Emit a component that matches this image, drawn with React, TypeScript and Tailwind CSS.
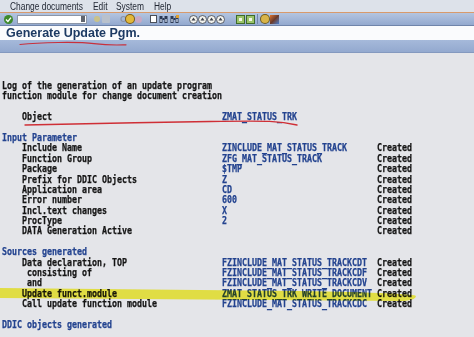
import React from "react"

// ── Log rows ───────────────────────────────────────────────

type Row =
  | { kind: "blank" }
  | { kind: "text"; text: string; color: string }
  | { kind: "item"; label: string; indent: number; value?: string; status?: string }

const BLUE = "text-[#23438f]"
const BLACK = "text-[#141414]"

const rows: Row[] = [
  { kind: "text", text: "Log of the generation of an update program", color: BLACK },
  { kind: "text", text: "function module for change document creation", color: BLACK },
  { kind: "blank" },
  { kind: "item", label: "Object", indent: 4, value: "ZMAT_STATUS_TRK" },
  { kind: "blank" },
  { kind: "text", text: "Input Parameter", color: BLUE },
  { kind: "item", label: "Include Name", indent: 4, value: "ZINCLUDE_MAT_STATUS_TRACK", status: "Created" },
  { kind: "item", label: "Function Group", indent: 4, value: "ZFG_MAT_STATUS_TRACK", status: "Created" },
  { kind: "item", label: "Package", indent: 4, value: "$TMP", status: "Created" },
  { kind: "item", label: "Prefix for DDIC Objects", indent: 4, value: "Z", status: "Created" },
  { kind: "item", label: "Application area", indent: 4, value: "CD", status: "Created" },
  { kind: "item", label: "Error number", indent: 4, value: "600", status: "Created" },
  { kind: "item", label: "Incl.text changes", indent: 4, value: "X", status: "Created" },
  { kind: "item", label: "ProcType", indent: 4, value: "2", status: "Created" },
  { kind: "item", label: "DATA Generation Active", indent: 4, value: "", status: "Created" },
  { kind: "blank" },
  { kind: "text", text: "Sources generated", color: BLUE },
  { kind: "item", label: "Data declaration, TOP", indent: 4, value: "FZINCLUDE_MAT_STATUS_TRACKCDT", status: "Created" },
  { kind: "item", label: "consisting of", indent: 5, value: "FZINCLUDE_MAT_STATUS_TRACKCDF", status: "Created" },
  { kind: "item", label: "and", indent: 5, value: "FZINCLUDE_MAT_STATUS_TRACKCDV", status: "Created" },
  { kind: "item", label: "Update funct.module", indent: 4, value: "ZMAT_STATUS_TRK_WRITE_DOCUMENT", status: "Created" },
  { kind: "item", label: "Call update function module", indent: 4, value: "FZINCLUDE_MAT_STATUS_TRACKCDC", status: "Created" },
  { kind: "blank" },
  { kind: "text", text: "DDIC objects generated", color: BLUE },
]

function LogLine({ row }: { row: Row }) {
  if (row.kind === "blank") return <div className="h-[10.4px]" />
  if (row.kind === "text")
    return <div className={`h-[10.4px] ${row.color}`}>{row.text}</div>
  const label = (" ".repeat(row.indent) + row.label).padEnd(44)
  const value = (row.value ?? "").padEnd(31)
  return (
    <div className="h-[10.4px]">
      <span className={BLACK}>{label}</span>
      <span className={BLUE}>{value}</span>
      {row.status && <span className={BLACK}>{row.status}</span>}
    </div>
  )
}

// ── Toolbar icons ──────────────────────────────────────────

function Page() {
  return <span className="ml-[8px] h-[8px] w-[7px] shrink-0 border border-[#4a4f5a] bg-white" />
}

function Binoculars({ plus, className }: { plus?: boolean; className: string }) {
  return (
    <svg width="9" height="9" viewBox="0 0 9 9" className={`shrink-0 ${className}`}>
      <rect x="0.5" y="1" width="3" height="7" fill="#2c3a55" />
      <rect x="5.5" y="1" width="3" height="7" fill="#2c3a55" />
      <rect x="3.5" y="3" width="2" height="2" fill="#2c3a55" />
      <rect x="1.3" y="4" width="1.4" height="3" fill="#c8d3e6" />
      <rect x="6.3" y="4" width="1.4" height="3" fill="#c8d3e6" />
      {plus && <rect x="6" y="0" width="3" height="3" fill="#e0a030" />}
    </svg>
  )
}

function PageArrow({ className }: { className: string }) {
  return (
    <svg width="9" height="9" viewBox="0 0 9 9" className={`shrink-0 ${className}`}>
      <circle cx="4.5" cy="4.5" r="4" fill="#f3f3ee" stroke="#3a3f4a" strokeWidth="0.8" />
      <path d="M2.5 5.5 L4.5 2.5 L6.5 5.5 Z" fill="#3a3f4a" />
    </svg>
  )
}

function GreenBox({ className }: { className: string }) {
  return (
    <span className={`flex h-[9px] w-[9px] shrink-0 items-center justify-center border border-[#3f6b2a] bg-[#9bc46a] ${className}`}>
      <span className="h-[3px] w-[3px] bg-[#f2f6e8]" />
    </span>
  )
}

// ── App ────────────────────────────────────────────────────

export default function App() {
  return (
    <div className="relative h-[337px] w-[474px] overflow-hidden bg-[#e4e5e9] font-['Liberation_Sans',Arial,sans-serif]">
      {/* menu bar */}
      <div className="flex h-[12px] items-end gap-[8px] bg-[#dde2ea] pl-[10px] text-[10px] leading-[10px] text-[#1e2430]">
        <span className="origin-bottom-left scale-x-[0.84]">Change documents</span>
        <span className="-ml-[12px] origin-bottom-left scale-x-[0.84]">Edit</span>
        <span className="-ml-[2px] origin-bottom-left scale-x-[0.84]">System</span>
        <span className="-ml-[3px] origin-bottom-left scale-x-[0.84]">Help</span>
      </div>
      <div className="h-[1px] bg-[#d89a6c]" />

      {/* system toolbar */}
      <div className="flex h-[13px] items-center border-b border-[#6f84aa] bg-gradient-to-b from-[#b4c5e0] to-[#93a9cf] pl-[4px]">
        <span className="flex h-[9px] w-[9px] shrink-0 items-center justify-center rounded-full bg-[#3d8a2c]">
          <svg width="7" height="7" viewBox="0 0 7 7">
            <path d="M1 3.6 L2.9 5.4 L6 1.6" fill="none" stroke="#fff" strokeWidth="1.4" />
          </svg>
        </span>
        <span className="ml-[4px] flex h-[9px] w-[70px] shrink-0 items-center justify-end border border-[#8c96a8] bg-white pr-[1px]">
          <span className="h-[6px] w-[4px] bg-[#60656f]" />
        </span>
        <span className="ml-[7px] h-[6px] w-[6px] shrink-0 rounded-full bg-[#c9c28a]" />
        <span className="ml-[2px] h-[8px] w-[8px] shrink-0 rounded-[1px] bg-[#b9c1cc]" />
        <span className="ml-[10px] w-[6px] shrink-0 text-[9px] font-bold leading-none text-[#8a94a6]">C</span>
        <span className="h-[8px] w-[8px] shrink-0 rounded-full bg-[#e2b83a] ring-1 ring-[#7b5a18]" />
        <span className="ml-[1px] h-[7px] w-[7px] shrink-0 rounded-full bg-[#c9a8c4]" />
        <Page />
        <Binoculars className="ml-[2px]" />
        <Binoculars plus className="ml-[2px]" />
        <PageArrow className="ml-[10px]" />
        <PageArrow className="" />
        <PageArrow className="" />
        <PageArrow className="" />
        <GreenBox className="ml-[11px]" />
        <GreenBox className="ml-[1px]" />
        <span className="ml-[2px] h-[10px] w-px shrink-0 bg-[#7186ab]" />
        <span className="ml-[3px] h-[8px] w-[8px] shrink-0 rounded-full bg-[#d8b448] ring-1 ring-[#6d5a20]" />
        <span className="ml-[1px] h-[9px] w-[9px] shrink-0 bg-gradient-to-br from-[#e0742a] via-[#6a3a2a] to-[#3a7ad0]" />
      </div>

      {/* title bar */}
      <div className="flex h-[14px] items-center bg-[#fafbfd] pl-[6px] text-[12.5px] font-bold leading-none text-[#1d3a63]">
        Generate Update Pgm.
      </div>

      {/* application toolbar */}
      <div className="h-[13px] border-b border-[#8499bf] bg-gradient-to-b from-[#a5b9da] to-[#93a9cf]" />

      {/* log list */}
      <div className="pl-[2px] pt-[28px]">
        <div className="origin-top-left scale-x-[0.8306] whitespace-pre font-['DejaVu_Sans_Mono',monospace] text-[10px] font-bold leading-[10.4px] [-webkit-text-stroke:0.25px]">
          {rows.map((row, i) => (
            <LogLine key={i} row={row} />
          ))}
        </div>
      </div>

      {/* hand-drawn annotations */}
      <svg className="pointer-events-none absolute left-0 top-0" width="474" height="337" viewBox="0 0 474 337">
        <path d="M0 288 L300 291 Q416 293 416 296 Q416 300 404 301 L0 298 Z" fill="#fbf63a" opacity="0.92" style={{ mixBlendMode: "multiply" }} />
        <path d="M20 44.5 C40 42.3 78 41.6 94 43.6 S118 45 126 44.8" fill="none" stroke="#c8303c" strokeWidth="1.2" strokeLinecap="round" />
        <path d="M25 125 C80 123.5 150 122.5 210 121.5 S280 121 297 125" fill="none" stroke="#cf2f36" strokeWidth="1.3" strokeLinecap="round" />
      </svg>
    </div>
  )
}
